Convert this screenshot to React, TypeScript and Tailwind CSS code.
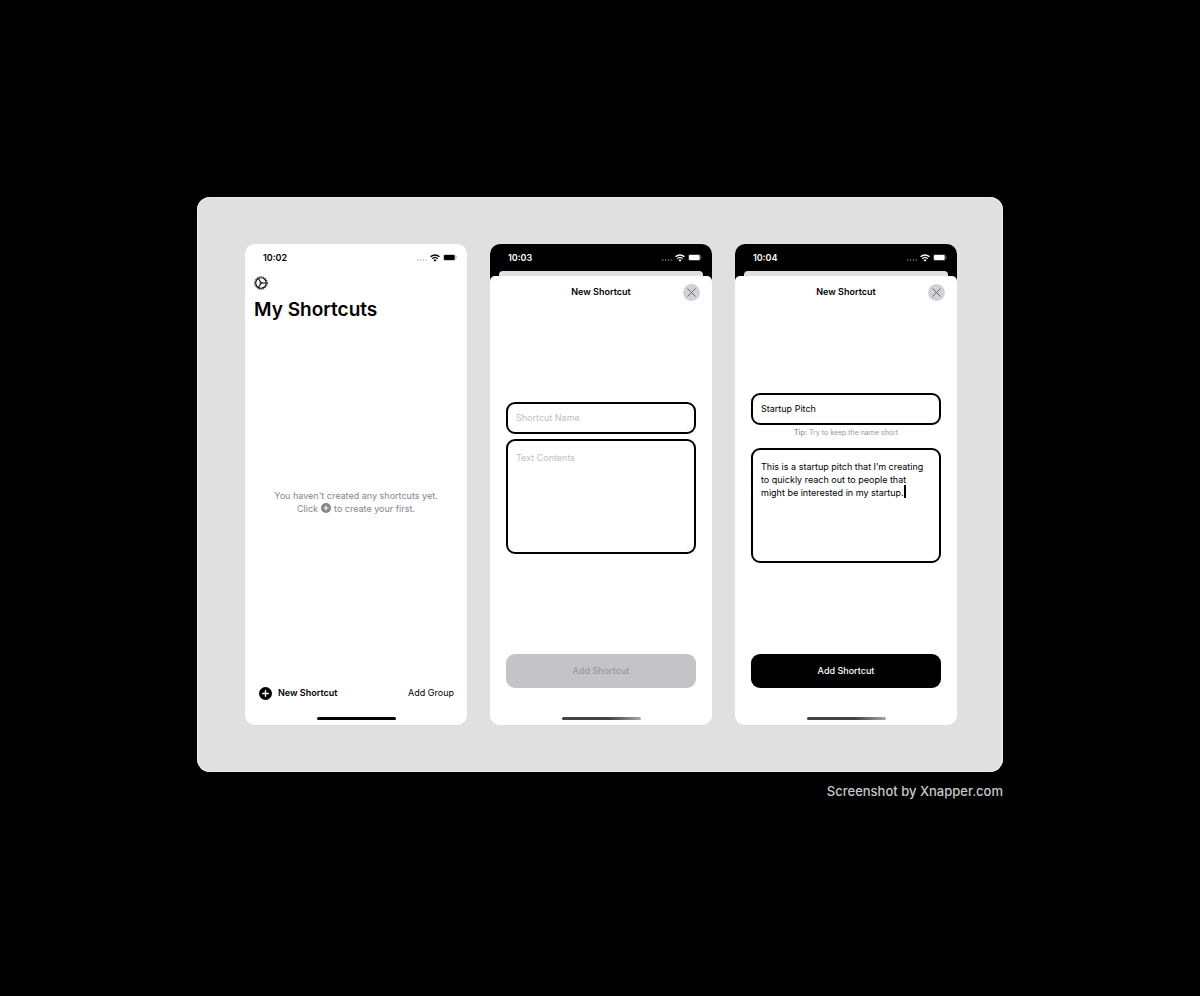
import React from 'react';

const GearIcon = () => (
  <svg viewBox="0 0 28 28" className="h-[14px] w-[14px]" fill="none" stroke="currentColor">
    <circle cx="14" cy="14" r="12.6" strokeWidth="2" strokeDasharray="2.4 2" />
    <circle cx="14" cy="14" r="10.6" strokeWidth="2.2" />
    <circle cx="14" cy="14" r="2" strokeWidth="2" />
    <path d="M16 14H24M13 12.2L9 5M13 15.8L9 23" strokeWidth="2.1" />
  </svg>
);

const PlusCircle = ({ className }: { className: string }) => (
  <svg viewBox="0 0 26 26" className={className} aria-hidden="true">
    <circle cx="13" cy="13" r="13" fill="currentColor" />
    <path d="M13 7.4V18.6M7.4 13H18.6" stroke="white" strokeWidth="2.8" strokeLinecap="round" />
  </svg>
);

const StatusBar = ({ time }: { time: string }) => (
  <div className="flex h-[27px] items-center justify-between pl-[18px] pr-[10px]">
    <span className="text-[9px] leading-3 font-semibold">{time}</span>
    <div className="flex items-center gap-[3px]">
      <svg viewBox="0 0 20 20" className="h-[10px] w-[10px] text-gray-400" fill="currentColor">
        <circle cx="1.6" cy="14" r="1.3" />
        <circle cx="7.2" cy="14" r="1.3" />
        <circle cx="12.8" cy="14" r="1.3" />
        <circle cx="18.4" cy="14" r="1.3" />
      </svg>
      <svg viewBox="0 0 20 16" className="h-2 w-[10px]" fill="none" stroke="currentColor">
        <path d="M1.2 5.6a12.6 12.6 0 0 1 17.6 0" strokeWidth="2.8" />
        <path d="M4.6 9.4a7.8 7.8 0 0 1 10.8 0" strokeWidth="2.5" />
        <path d="M10 15.4L7 12.2a4.2 4.2 0 0 1 6 0Z" fill="currentColor" stroke="none" />
      </svg>
      <svg viewBox="0 0 28 14" className="h-[7px] w-[14px]">
        <rect x="0.7" y="0.7" width="24" height="12.6" rx="3.4" fill="none" stroke="#8e8e93" strokeWidth="1" />
        <rect x="2" y="2" width="21.4" height="10" rx="2.2" fill="currentColor" />
        <path d="M26 4.6c1.6.6 1.6 4.2 0 4.8Z" fill="#8e8e93" />
      </svg>
    </div>
  </div>
);

const HomeScreen = () => (
  <section className="flex flex-col overflow-hidden rounded-[10px] bg-white">
    <StatusBar time="10:02" />
    <div className="px-[9px] pt-[5px]">
      <button type="button" aria-label="Settings" className="block">
        <GearIcon />
      </button>
      <h1 className="mt-2 text-[19px] leading-6 font-semibold">My Shortcuts</h1>
    </div>
    <div className="flex flex-1 flex-col items-center justify-center pb-1 text-center text-[9px] leading-[13px] text-[#858589]">
      <p>You haven't created any shortcuts yet.</p>
      <p className="flex items-center gap-[3px]">
        Click <PlusCircle className="h-[10px] w-[10px]" /> to create your first.
      </p>
    </div>
    <div className="flex items-center justify-between pl-[14px] pr-[13px]">
      <button type="button" className="flex items-center gap-[6px] text-[9px] leading-4 font-semibold">
        <PlusCircle className="h-[13px] w-[13px]" />
        New Shortcut
      </button>
      <button type="button" className="text-[9px] leading-4">Add Group</button>
    </div>
    <div className="mx-auto mt-4 mb-[5px] h-[3px] w-[79px] rounded-full bg-black" />
  </section>
);

type SheetProps = {
  id: string;
  time: string;
  name?: string;
  contents?: string;
};

const ShortcutSheet = ({ id, time, name = '', contents = '' }: SheetProps) => {
  const filled = name !== '';

  return (
    <section className="flex flex-col overflow-hidden rounded-[10px] bg-white">
      <div className="bg-black pb-[5px] text-white">
        <StatusBar time={time} />
        <div className="mx-[9px] h-[5px] rounded-t-[4px] bg-[#e0e0e0]" />
      </div>
      <div className="-mt-[5px] flex flex-1 flex-col rounded-t-[5px] bg-white">
        <header className="grid h-8 grid-cols-[1fr_auto_1fr] items-center px-3">
          <h2 className="col-start-2 text-[9px] leading-4 font-semibold">New Shortcut</h2>
          <button
            type="button"
            aria-label="Close"
            className="flex h-[17px] w-[17px] items-center justify-center justify-self-end rounded-full bg-[#d1d1d6] text-[#6c6c70]"
          >
            <svg viewBox="0 0 18 18" className="h-[9px] w-[9px]" stroke="currentColor" strokeWidth="2" strokeLinecap="round">
              <path d="M1.5 1.5L16.5 16.5M16.5 1.5L1.5 16.5" />
            </svg>
          </button>
        </header>
        <form className="flex flex-1 flex-col px-4">
          <div className="flex flex-1 flex-col justify-center">
            <input
              type="text"
              aria-label="Shortcut Name"
              placeholder="Shortcut Name"
              defaultValue={name}
              className="h-8 w-full rounded-[9px] border-2 border-black px-2 pb-[2px] text-[9px] leading-4 outline-none placeholder:text-[#c0c0c2]"
            />
            {filled && (
              <p className="mt-[2px] mb-[9px] text-center text-[7px] leading-3 text-[#98989c]">
                <b className="font-semibold">Tip:</b> Try to keep the name short
              </p>
            )}
            <div className={filled ? 'relative' : 'relative mt-[5px]'}>
              <textarea
                id={id}
                aria-label="Text Contents"
                placeholder="Text Contents"
                defaultValue={contents}
                className="block h-[115px] w-full resize-none overflow-hidden rounded-[9px] border-2 border-black px-2 py-[10px] text-[9px] leading-[13px] outline-none placeholder:text-[#c0c0c2]"
              />
              {filled && <span className="absolute top-[37px] left-[153px] h-[13px] w-[2px] bg-black" />}
            </div>
          </div>
          <button
            type="button"
            disabled={!filled}
            className="mt-[6px] h-[34px] w-full rounded-[9px] bg-black text-[9px] leading-4 font-medium text-white disabled:bg-[#c4c4c6] disabled:text-[#98989b]"
          >
            Add Shortcut
          </button>
        </form>
        <div className="mx-auto mt-[29px] mb-[5px] h-[3px] w-[79px] rounded-full bg-linear-to-r from-[#444] from-60% to-[#aaa]" />
      </div>
    </section>
  );
};

export default function App() {
  return (
    <main className="min-h-screen bg-black px-6 pt-[197px] font-['Inter',sans-serif]">
      <div className="mx-auto max-w-[806px]">
        <div className="grid min-h-[575px] grid-cols-3 gap-[23px] rounded-[13px] bg-[#e0e0e0] py-[47px] pr-[46px] pl-12 text-black inset-ring inset-ring-[#ececec]">
          <HomeScreen />
          <ShortcutSheet id="contents-empty" time="10:03" />
          <ShortcutSheet
            id="contents-filled"
            time="10:04"
            name="Startup Pitch"
            contents="This is a startup pitch that I’m creating to quickly reach out to people that might be interested in my startup."
          />
        </div>
        <p className="mt-[9px] text-right text-[13px] leading-5 font-medium text-[#c8c8c8]">Screenshot by Xnapper.com</p>
      </div>
    </main>
  );
}
